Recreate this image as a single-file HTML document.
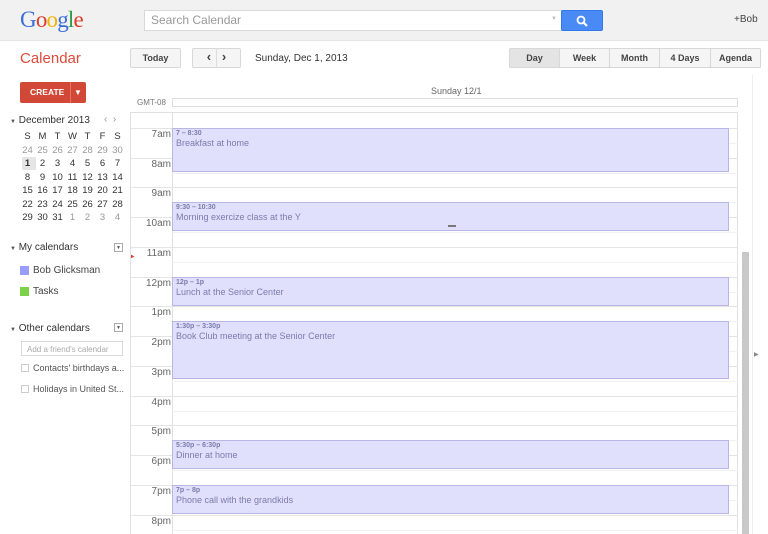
<!DOCTYPE html><html><head><style>
*{margin:0;padding:0;box-sizing:border-box}
body{width:768px;height:534px;overflow:hidden;background:#fff;font-family:"Liberation Sans",Arial,sans-serif;color:#222;position:relative}
.a{position:absolute}
.top{left:0;top:0;width:768px;height:41px;background:#f1f1f1;border-bottom:1px solid #e5e5e5}
.btn{position:absolute;height:20px;background:#f5f5f5;border:1px solid #d8d8d8;border-radius:2px;font-size:9px;font-weight:bold;color:#444;text-align:center;line-height:18px}
.hr{position:absolute;left:172px;width:566px;height:1px;background:#e4e4e4}
.hh{position:absolute;left:172px;width:566px;height:1px;background:#f1f1f1}
.t{position:absolute;left:130px;width:41px;text-align:right;font-size:10px;color:#666}
.ev{position:absolute;left:172px;width:557px;background:#e0e0fd;border:1px solid #b7b7e3;color:#7b7bab;padding:1px 3px;font-size:9px;line-height:10px}
.ev b{font-size:7px;display:block;line-height:8px}
.mini{position:absolute;left:20px;top:130px;font-size:9.5px;color:#333}
.mini td{width:15px;height:13.5px;text-align:center}
.g{color:#999}
.sb{font-size:10px;color:#444}
</style></head><body>
<div class="a top"></div>
<div class="a" style="left:20px;top:7px;font-family:'Liberation Serif',serif;font-size:23px;letter-spacing:-0.8px"><span style="color:#3b6fd8">G</span><span style="color:#d93d2b">o</span><span style="color:#f0b400">o</span><span style="color:#3b6fd8">g</span><span style="color:#2f9b42">l</span><span style="color:#d93d2b">e</span></div>
<div class="a" style="left:144px;top:10px;width:418px;height:21px;background:#fff;border:1px solid #d9d9d9;font-size:12px;color:#999;padding:2px 6px">Search Calendar<span style="position:absolute;right:4px;top:5px;font-size:6px;color:#bbb">▼</span></div>
<div class="a" style="left:561px;top:10px;width:42px;height:21px;background:#4a8af4;border:1px solid #3079ed;border-radius:2px"><svg width="42" height="21"><circle cx="19" cy="9" r="3.5" stroke="#fff" stroke-width="1.8" fill="none"/><line x1="21.5" y1="11.5" x2="25" y2="15" stroke="#fff" stroke-width="2.2"/></svg></div>
<div class="a" style="left:734px;top:14px;font-size:10px;color:#444">+Bob</div>
<div class="a" style="left:20px;top:50px;font-size:15px;color:#dd4b39">Calendar</div>
<div class="btn" style="left:130px;top:48px;width:51px">Today</div>
<div class="btn" style="left:192px;top:48px;width:49px;font-size:13px;line-height:16px">‹&nbsp;&nbsp;&nbsp;›</div>
<div class="a" style="left:216px;top:48px;width:1px;height:20px;background:#ddd"></div>
<div class="a" style="left:255px;top:53px;font-size:10px;color:#333">Sunday, Dec 1, 2013</div>
<div class="btn" style="left:509px;top:48px;width:252px;background:#f5f5f5"></div>
<div class="btn" style="left:509px;top:48px;width:51px;background:#e4e4e4">Day</div>
<div class="btn" style="left:559px;top:48px;width:51px">Week</div>
<div class="btn" style="left:609px;top:48px;width:51px">Month</div>
<div class="btn" style="left:659px;top:48px;width:52px">4 Days</div>
<div class="btn" style="left:710px;top:48px;width:51px">Agenda</div>
<div class="a" style="left:20px;top:82px;width:66px;height:21px;background:#d14836;border-radius:2px;color:#fff;font-size:8.5px;font-weight:bold;line-height:21px;padding-left:10px">CREATE<span style="position:absolute;left:50px;top:0;width:1px;height:21px;background:#e27365"></span><span style="position:absolute;left:54px;font-size:8px">▼</span></div>
<div class="a" style="left:10px;top:115px;font-size:10px;color:#333"><span style="font-size:6px;color:#555">▼</span> December 2013</div>
<div class="a" style="left:104px;top:114px;font-size:10px;color:#999">‹&nbsp;&nbsp;›</div>
<div class="a" style="left:22px;top:157px;width:14px;height:13px;background:#e5e5e5"></div>
<table class="mini" cellspacing="0" cellpadding="0">
<tr><td>S</td><td>M</td><td>T</td><td>W</td><td>T</td><td>F</td><td>S</td></tr>
<tr class="g"><td>24</td><td>25</td><td>26</td><td>27</td><td>28</td><td>29</td><td>30</td></tr>
<tr><td><b>1</b></td><td>2</td><td>3</td><td>4</td><td>5</td><td>6</td><td>7</td></tr>
<tr><td>8</td><td>9</td><td>10</td><td>11</td><td>12</td><td>13</td><td>14</td></tr>
<tr><td>15</td><td>16</td><td>17</td><td>18</td><td>19</td><td>20</td><td>21</td></tr>
<tr><td>22</td><td>23</td><td>24</td><td>25</td><td>26</td><td>27</td><td>28</td></tr>
<tr><td>29</td><td>30</td><td>31</td><td class="g">1</td><td class="g">2</td><td class="g">3</td><td class="g">4</td></tr>
</table>
<div class="a" style="left:10px;top:242px;font-size:10px;color:#333"><span style="font-size:6px;color:#555">▼</span> My calendars</div>
<div class="a" style="left:114px;top:243px;width:9px;height:9px;border:1px solid #aaa;font-size:5px;text-align:center;line-height:8px;color:#555">▼</div>
<div class="a" style="left:20px;top:266px;width:9px;height:9px;background:#9a9cff"></div><div class="a sb" style="left:33px;top:265px">Bob Glicksman</div>
<div class="a" style="left:20px;top:287px;width:9px;height:9px;background:#7bd148"></div><div class="a sb" style="left:33px;top:286px">Tasks</div>
<div class="a" style="left:10px;top:323px;font-size:10px;color:#333"><span style="font-size:6px;color:#555">▼</span> Other calendars</div>
<div class="a" style="left:114px;top:323px;width:9px;height:9px;border:1px solid #aaa;font-size:5px;text-align:center;line-height:8px;color:#555">▼</div>
<div class="a" style="left:21px;top:341px;width:102px;height:15px;border:1px solid #d9d9d9;font-size:8px;color:#aaa;padding:3px 5px">Add a friend's calendar</div>
<div class="a" style="left:21px;top:364px;width:8px;height:8px;border:1px solid #ccc"></div><div class="a" style="left:33px;top:363px;font-size:9px;color:#555">Contacts' birthdays a...</div>
<div class="a" style="left:21px;top:385px;width:8px;height:8px;border:1px solid #ccc"></div><div class="a" style="left:33px;top:384px;font-size:9px;color:#555">Holidays in United St...</div>
<div class="a" style="left:130px;top:253px;font-size:6px;color:#d14836">▶</div>
<div class="a" style="left:431px;top:86px;font-size:9px;color:#666">Sunday 12/1</div>
<div class="a" style="left:137px;top:98px;font-size:8px;color:#777">GMT-08</div>
<div class="a" style="left:172px;top:98px;width:566px;height:9px;border:1px solid #ddd"></div>
<div class="a" style="left:130px;top:112px;width:608px;height:422px;border:1px solid #e0e0e0;border-bottom:none"></div>
<div class="a" style="left:172px;top:112px;width:1px;height:422px;background:#e0e0e0"></div>
<div class="hr" style="left:130px;width:608px;top:128px"></div>
<div class="hr" style="left:130px;width:608px;top:158px"></div>
<div class="hr" style="left:130px;width:608px;top:187px"></div>
<div class="hr" style="left:130px;width:608px;top:217px"></div>
<div class="hr" style="left:130px;width:608px;top:247px"></div>
<div class="hr" style="left:130px;width:608px;top:277px"></div>
<div class="hr" style="left:130px;width:608px;top:306px"></div>
<div class="hr" style="left:130px;width:608px;top:336px"></div>
<div class="hr" style="left:130px;width:608px;top:366px"></div>
<div class="hr" style="left:130px;width:608px;top:396px"></div>
<div class="hr" style="left:130px;width:608px;top:425px"></div>
<div class="hr" style="left:130px;width:608px;top:455px"></div>
<div class="hr" style="left:130px;width:608px;top:485px"></div>
<div class="hr" style="left:130px;width:608px;top:515px"></div>
<div class="hh" style="top:143px"></div><div class="hh" style="top:173px"></div><div class="hh" style="top:202px"></div><div class="hh" style="top:232px"></div><div class="hh" style="top:262px"></div><div class="hh" style="top:292px"></div><div class="hh" style="top:321px"></div><div class="hh" style="top:351px"></div><div class="hh" style="top:381px"></div><div class="hh" style="top:411px"></div><div class="hh" style="top:440px"></div><div class="hh" style="top:470px"></div><div class="hh" style="top:500px"></div><div class="hh" style="top:530px"></div>
<div class="t" style="top:129px">7am</div><div class="t" style="top:159px">8am</div><div class="t" style="top:188px">9am</div><div class="t" style="top:218px">10am</div><div class="t" style="top:248px">11am</div><div class="t" style="top:278px">12pm</div><div class="t" style="top:307px">1pm</div><div class="t" style="top:337px">2pm</div><div class="t" style="top:367px">3pm</div><div class="t" style="top:397px">4pm</div><div class="t" style="top:426px">5pm</div><div class="t" style="top:456px">6pm</div><div class="t" style="top:486px">7pm</div><div class="t" style="top:516px">8pm</div>
<div class="ev" style="top:128px;height:44px"><b>7 – 8:30</b>Breakfast at home</div>
<div class="ev" style="top:202px;height:29px"><b>9:30 – 10:30</b>Morning exercize class at the Y</div>
<div class="a" style="left:448px;top:225px;width:8px;height:2px;border-top:1px solid #777;border-bottom:1px solid #777"></div>
<div class="ev" style="top:277px;height:29px"><b>12p – 1p</b>Lunch at the Senior Center</div>
<div class="ev" style="top:321px;height:58px"><b>1:30p – 3:30p</b>Book Club meeting at the Senior Center</div>
<div class="ev" style="top:440px;height:29px"><b>5:30p – 6:30p</b>Dinner at home</div>
<div class="ev" style="top:485px;height:29px"><b>7p – 8p</b>Phone call with the grandkids</div>
<div class="a" style="left:742px;top:252px;width:7px;height:282px;background:#c8c8c8"></div>
<div class="a" style="left:752px;top:75px;width:1px;height:459px;background:#eee"></div>
<div class="a" style="left:754px;top:351px;font-size:6px;color:#888">▶</div>
</body></html>
